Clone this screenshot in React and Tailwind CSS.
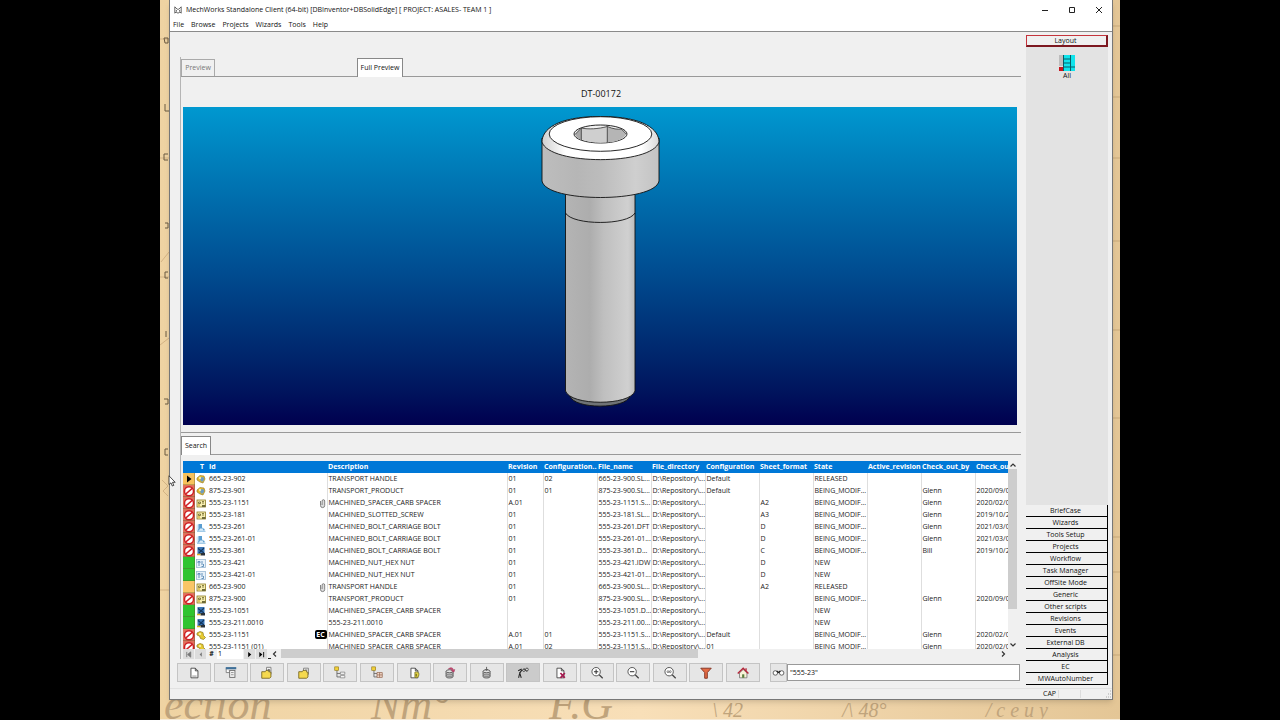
import React from "react";

const MENUS = ["File", "Browse", "Projects", "Wizards", "Tools", "Help"];

const SECTIONS = [
  "BriefCase", "Wizards", "Tools Setup", "Projects", "Workflow", "Task Manager", "OffSite Mode", "Generic",
  "Other scripts", "Revisions", "Events", "External DB", "Analysis", "EC", "MWAutoNumber",
];

const HEADERS = [
  "Revision", "Configuration...", "File_name", "File_directory", "Configuration", "Sheet_format", "State",
  "Active_revision", "Check_out_by", "Check_out_date",
];

const DIR = "D:\\Repository\\...";
const MOD = "BEING_MODIF...";
const SPACER = "MACHINED_SPACER_CARB SPACER";
const BOLT = "MACHINED_BOLT_CARRIAGE BOLT";
const NUT = "MACHINED_NUT_HEX NUT";

// status, type, id, badge, description, then one value for each of HEADERS
const ROWS = [
  ["current", "assembly", "665-23-902", "", "TRANSPORT HANDLE", "01", "02", "665-23-900.SL...", DIR, "Default", "", "RELEASED", "", "", ""],
  ["blocked", "assembly", "875-23-901", "", "TRANSPORT_PRODUCT", "01", "01", "875-23-900.SL...", DIR, "Default", "", MOD, "", "Glenn", "2020/09/03"],
  ["blocked", "drawing", "555-23-1151", "clip", SPACER, "A.01", "", "555-23-1151.S...", DIR, "", "A2", MOD, "", "Glenn", "2020/02/05"],
  ["blocked", "drawing", "555-23-181", "", "MACHINED_SLOTTED_SCREW", "01", "", "555-23-181.SL...", DIR, "", "A3", MOD, "", "Glenn", "2019/10/22"],
  ["blocked", "draft", "555-23-261", "", BOLT, "01", "", "555-23-261.DFT", DIR, "", "D", MOD, "", "Glenn", "2021/03/02"],
  ["blocked", "draft", "555-23-261-01", "", BOLT, "01", "", "555-23-261-01...", DIR, "", "D", MOD, "", "Glenn", "2021/03/02"],
  ["blocked", "dwg", "555-23-361", "", BOLT, "01", "", "555-23-361.D...", DIR, "", "C", MOD, "", "Bill", "2019/10/22"],
  ["new", "sheet", "555-23-421", "", NUT, "01", "", "555-23-421.IDW", DIR, "", "D", "NEW", "", "", ""],
  ["new", "sheet", "555-23-421-01", "", NUT, "01", "", "555-23-421-01...", DIR, "", "D", "NEW", "", "", ""],
  ["released", "drawing", "665-23-900", "clip", "TRANSPORT HANDLE", "01", "", "665-23-900.SL...", DIR, "", "A2", "RELEASED", "", "", ""],
  ["blocked", "drawing", "875-23-900", "", "TRANSPORT_PRODUCT", "01", "", "875-23-900.SL...", DIR, "", "", MOD, "", "Glenn", "2020/09/03"],
  ["new", "dwg", "555-23-1051", "", SPACER, "", "", "555-23-1051.D...", DIR, "", "", "NEW", "", "", ""],
  ["new", "dwg", "555-23-211.0010", "", "555-23-211.0010", "", "", "555-23-211.00...", DIR, "", "", "NEW", "", "", ""],
  ["blocked", "part", "555-23-1151", "ec", SPACER, "A.01", "01", "555-23-1151.S...", DIR, "Default", "", MOD, "", "Glenn", "2020/02/05"],
  ["blocked", "part", "555-23-1151 (01)", "", SPACER, "A.01", "02", "555-23-1151.S...", DIR, "01", "", MOD, "", "Glenn", "2020/02/05"],
];

const STATUS_BG = {
  current: "bg-[#f7c25c]",
  blocked: "bg-[#e0705c]",
  new: "bg-[#2fc42f]",
  released: "bg-[#f9c566]",
};

function StatusIcon({ kind }) {
  return (
    <svg viewBox="0 0 12 12" className="block size-3" aria-hidden="true">
      {kind === "current" && <path d="M4 2.500v7L8.500 6z" fill="#000" />}
      {kind === "blocked" && (
        <>
          <circle cx="6" cy="6.200" r="4.500" fill="#fff" stroke="#cf1f25" strokeWidth="1.500" />
          <path d="M2.800 9 9.200 3.400" stroke="#cf1f25" strokeWidth="1.500" />
        </>
      )}
      <path d="M0 11.500h12M11.500 0v12" stroke="#5a5a2c" strokeOpacity=".35" />
    </svg>
  );
}

function TypeIcon({ kind }) {
  return (
    <svg viewBox="0 0 12 12" className="block size-3" aria-hidden="true">
      {kind === "assembly" && (
        <>
          <path d="M2 5 5 2.500l4 .5 1 3-2 4-3-1-3-2z" fill="#e3b92d" stroke="#93751b" strokeWidth=".6" />
          <path d="M6 4l3 .5V7l-2 2-2-2z" fill="#6d9cc0" />
          <circle cx="5" cy="5" r="1.200" fill="#f8ec9c" />
        </>
      )}
      {kind === "part" && (
        <>
          <path d="M2 4 5 2.500l3 1 .5 3 2 2-2 2-3-1-1-2.500L2 6z" fill="#e6ca32" stroke="#8c7a1c" strokeWidth=".7" />
          <circle cx="5" cy="5" r="1.100" fill="#fbf6b8" />
        </>
      )}
      {kind === "drawing" && (
        <>
          <rect x="2" y="3" width="8.500" height="7" fill="#f7eeb0" stroke="#8d7c22" strokeWidth=".8" />
          <path d="M3.500 5h2v1.500h-2zM7 4.500h2M7 6h2" fill="none" stroke="#6b6326" strokeWidth=".8" />
          <path d="M7 8h3.500v2H7z" fill="#6e6a38" />
          <path d="M3 8h2" stroke="#c69e12" />
        </>
      )}
      {kind === "draft" && (
        <>
          <path d="M1.500 3.500h3l5 4.500v2h-8z" fill="#d6eaf8" />
          <path d="M3.500 8V3h3.500v4l2.500 1v1.500h-1L7.500 7.500H5L4 9.500H2.500z" fill="#5a9dd0" />
          <path d="M2 10.300h8.500" stroke="#8dbfe2" />
        </>
      )}
      {kind === "dwg" && (
        <>
          <rect x="2.500" y="2" width="7" height="7" fill="#3d78b8" />
          <path d="M3 3.500 9 8M9 3 4 8" stroke="#12365f" strokeWidth="1.100" />
          <path d="M5.500 8h4.500v2.500H5.500z" fill="#2b3138" />
          <path d="M2 9.500h3.500" stroke="#dbb327" strokeWidth="1.500" />
        </>
      )}
      {kind === "sheet" && (
        <>
          <rect x="1.500" y="2.500" width="9" height="8" fill="#e7f1f9" stroke="#9bb9d3" strokeWidth=".8" />
          <path d="M3 4.500h2v1.500H3zM3 8h2M7 4v4M8.500 7v2.500H6.500" fill="none" stroke="#5688b4" strokeWidth=".9" />
        </>
      )}
    </svg>
  );
}

function Badge({ kind }) {
  if (kind === "clip") {
    return (
      <svg viewBox="0 0 8 12" className="h-3 w-2 shrink-0" aria-label="Attachment">
        <path d="M1.500 4v4.500a2 2 0 0 0 4.200 0V4a1.300 1.300 0 0 0-2.600 0v4" fill="#ddd" stroke="#777" strokeWidth=".9" />
      </svg>
    );
  }
  return (
    <span className="mt-px flex h-[9px] w-3 shrink-0 items-center justify-center rounded-xs bg-black font-bold text-white">EC</span>
  );
}

const PAGE = <path d="M4.500 2.500h5l3 3v8h-8z M9.500 2.500v3h3" fill="#fff" stroke="#444" />;
const FOLDER = <path d="M2 6.500h4l1-1.500h4v2h1.500v5.500L11 14H2z" fill="#f5d94e" stroke="#6d5a12" strokeWidth=".9" />;
const LENS = (
  <>
    <circle cx="7" cy="6.500" r="4.800" fill="#fff" stroke="#444" />
    <path d="m10.500 10 4 4" stroke="#444" strokeWidth="1.500" />
  </>
);
const DRUM = (
  <>
    <path d="M3.500 6v6c0 2.300 8 2.300 8 0V6" fill="#bbb" stroke="#555" />
    <ellipse cx="7.500" cy="6" rx="4" ry="1.700" fill="#e4e4e4" stroke="#555" />
    <path d="M3.500 8.500c0 2 8 2 8 0M3.500 10.500c0 2 8 2 8 0" fill="none" stroke="#666" strokeWidth=".7" />
  </>
);
const TREE = (
  <>
    <path d="M4.500 5v7.500H8M4.500 8.500H8" fill="none" stroke="#666" />
    <rect x="2" y="1" width="4.500" height="4" fill="#f2d038" stroke="#8a7419" strokeWidth=".7" />
  </>
);

const TOOLS = [
  ["New document", <>{PAGE}<path d="M6 11.500h5" stroke="#888" /></>],
  ["Card view", <>
    <path d="M2.500 3v4.500h4" fill="#fff" stroke="#777" />
    <path d="M2 2.500h12" stroke="#3e6f98" strokeWidth="2.500" />
    <rect x="6.500" y="5" width="6" height="8" fill="#f4f4f4" stroke="#666" />
    <path d="M8 7.500h3M8 10h3" stroke="#888" />
  </>],
  ["Check in", <><path d="M7.500 1.500h5v8h-5z" fill="#fff" stroke="#777" />{FOLDER}<path d="M10 7V3.500M8.500 5 10 3.300 11.500 5" fill="none" stroke="#555" strokeWidth=".8" /></>],
  ["Check out", <><path d="M7.500 2.500h5.500v7H7.500z" fill="#fff" stroke="#777" />{FOLDER}<path d="M9 4.500h3" stroke="#777" /></>],
  ["Collapse tree", <>{TREE}<path d="M8.500 7h5v2.500h-5zM8.500 11h5v2.500h-5z" fill="#fff" stroke="#777" strokeWidth=".8" /></>],
  ["Expand tree", <>{TREE}<path d="M8 7.500h6V13H8z" fill="#f7dfd0" stroke="#8e5d45" strokeWidth=".8" /><path d="M11 7.500V13M8 10.200h6" stroke="#8e5d45" strokeWidth=".8" /></>],
  ["Document properties", <>{PAGE}<path d="M9 7c4-1 5 1 4.500 3.500S11 14 9 13z" fill="#e2d244" stroke="#6f6a1d" strokeWidth=".8" /><path d="M10.500 9v3" stroke="#494613" /></>],
  ["Restore from vault", <>{DRUM}<path d="M6 3.500c3-2.500 5-2 6 1l1.500-.5-1 3-3-1.500 1.200-.6c-1-1.500-2.500-1.500-4.700-1.400z" fill="#cf4b76" stroke="#8f2a4c" strokeWidth=".5" /></>],
  ["Vault", <>{DRUM}<path d="M7.500 1v4M6 3.500 7.500 5 9 3.500" fill="none" stroke="#555" /></>],
  ["Track", <>
    <path d="M3 13.500C4 9 4 6 7.500 4.500M4 7l2 6.500M2.500 5.500l4-2" fill="none" stroke="#222" strokeWidth="1.200" />
    <path d="M8 4.500h4.500M9 2.500l3.500 4" stroke="#333" />
    <circle cx="9" cy="5" r="1.300" fill="#eee" stroke="#222" strokeWidth=".8" />
    <circle cx="12.500" cy="4" r="1.600" fill="#ddd" stroke="#222" strokeWidth=".8" />
  </>],
  ["Remove document", <>{PAGE}<path d="m8.500 8 5 5.500M13.500 8l-5 5.500" stroke="#a51c50" strokeWidth="2" /></>],
  ["Zoom in", <>{LENS}<path d="M4.500 6.500h5M7 4v5" stroke="#333" strokeWidth="1.200" /></>],
  ["Zoom out", <>{LENS}<path d="M4.500 6.500h5" stroke="#333" strokeWidth="1.200" /></>],
  ["Zoom all", <>{LENS}<circle cx="5.700" cy="6.500" r="1.100" fill="none" stroke="#555" strokeWidth=".8" /><circle cx="8.300" cy="6.500" r="1.100" fill="none" stroke="#555" strokeWidth=".8" /></>],
  ["Filter", <path d="M2 2.500h12L9.500 7.500V14h-3V7.500z" fill="#e36a43" stroke="#7d2b1b" />],
  ["Home", <>
    <path d="M4 8v5.500h8.500V8L8.200 4z" fill="#f8f2d9" stroke="#666" strokeWidth=".8" />
    <path d="M2 8.500 8.200 2.500l6 6" fill="none" stroke="#b3273a" strokeWidth="1.700" />
    <path d="M7 9.500h2.500v4H7z" fill="#5b7f3d" />
    <path d="M11.500 2.500v3" stroke="#b3273a" strokeWidth="1.500" />
  </>],
];

function Bolt() {
  return (
    <svg viewBox="540 107 120 318" className="h-full" role="img" aria-label="Socket head bolt">
      <defs>
        <linearGradient id="head" x1="0" x2="1">
          <stop offset="0" stopColor="#bdbdbd" />
          <stop offset=".3" stopColor="#b6b6b6" />
          <stop offset=".5" stopColor="#bcbcbc" />
          <stop offset=".8" stopColor="#cfcfcf" />
          <stop offset="1" stopColor="#c3c3c3" />
        </linearGradient>
        <linearGradient id="shank" x1="0" x2="1">
          <stop offset="0" stopColor="#b4b4b4" />
          <stop offset=".35" stopColor="#adadad" />
          <stop offset=".55" stopColor="#bfbfbf" />
          <stop offset=".9" stopColor="#d0d0d0" />
          <stop offset="1" stopColor="#bcbcbc" />
        </linearGradient>
        <linearGradient id="rim" x1="0" x2="1">
          <stop offset="0" stopColor="#d0d0d0" />
          <stop offset=".2" stopColor="#fff" />
          <stop offset=".85" stopColor="#fff" />
          <stop offset="1" stopColor="#d8d8d8" />
        </linearGradient>
      </defs>
      <g stroke="#111" strokeWidth=".9">
        <path d="M570 396c4 13.500 56 13.500 60 0z" fill="#6f7376" />
        <path d="M565.500 190v201c5 15 64.500 15 69.500 0V190z" fill="url(#shank)" />
        <path d="M565.500 213c7 12.600 62.500 12.600 69.500 0" fill="none" />
        <path d="M542 138v43c4 22 113 22 117 0v-43z" fill="url(#head)" />
        <path d="M542 142c0-12 14-25.500 58.500-25.500S659 130 659 142c-7 23.500-110 23.500-117 0z" fill="url(#rim)" />
        <ellipse cx="600.500" cy="134" rx="51.300" ry="17.300" fill="#fff" />
        <ellipse cx="600.500" cy="134" rx="26.500" ry="9" fill="#f2f2f2" />
      </g>
      <path d="m575 134.500 6.300-6.500c7 1.500 17 1 26-1.500 6 2.500 10 3 14 2.500l5 5c-3 5.500-12 8.700-26 8.700-11 0-21-2.500-25.300-8.200z" fill="#cfcfcf" />
      <path d="M607.300 126.500c6 2.500 10 3 14 2.500l5 5c-3 5-9 7.500-19 8.500z" fill="#b5b5b5" />
      <path d="m575 134.500 6.300-6.500v12.300c-3-1.500-5-3.300-6.300-5.800z" fill="#a8a8a8" />
      <path d="M581.300 128v12.300m26-13.800v16M575 134.500l6.300-6.500c7 1.500 17 1 26-1.500 6 2.500 10 3 14 2.500l5 5" fill="none" stroke="#333" strokeWidth=".8" />
    </svg>
  );
}

const NAV = "flex w-[11px] shrink-0 items-center justify-center bg-[#dcdcdc]";
const CELL = "overflow-hidden border-l border-[#dedede] pl-px align-top whitespace-nowrap";

function Grid() {
  return (
    <div className="h-47 overflow-hidden bg-white">
      <table className="w-[846px] table-fixed border-collapse text-[#222]">
        <colgroup>
          <col className="w-3" />
          <col className="w-[13px]" />
          <col className="w-[119px]" />
          <col className="w-[180px]" />
          <col className="w-9" />
          {HEADERS.slice(1).map((h) => <col key={h} className="w-[54px]" />)}
        </colgroup>
        <thead>
          <tr className="h-3 bg-[#0078d7] text-left leading-3 text-white">
            <th className="p-0" aria-label="Status" />
            <th className="p-0 pr-1 text-right font-bold">T</th>
            <th className="p-0 pl-px font-bold">Id</th>
            {["Description", ...HEADERS].map((h) => (
              <th key={h} className="overflow-hidden p-0 pl-px font-bold whitespace-nowrap">{h}</th>
            ))}
          </tr>
        </thead>
        <tbody>
          {ROWS.map(([status, type, id, badge, ...rest], i) => (
            <tr key={i} className="h-3 leading-[11px]">
              <td className={`p-0 align-top ${STATUS_BG[status]}`}><StatusIcon kind={status} /></td>
              <td className="p-0 align-top"><TypeIcon kind={type} /></td>
              <td className="p-0 align-top">
                <div className="flex h-3 justify-between pl-px whitespace-nowrap">
                  <span>{id}</span>
                  {badge && <Badge kind={badge} />}
                </div>
              </td>
              {rest.map((v, j) => <td key={j} className={CELL}>{v}</td>)}
            </tr>
          ))}
        </tbody>
      </table>
    </div>
  );
}

function Chevron({ d }) {
  return (
    <svg viewBox="0 0 8 8" className="size-2 shrink-0" aria-hidden="true">
      <path d={d} fill="none" stroke="#333" strokeWidth="1.200" />
    </svg>
  );
}

function Desktop() {
  return (
    <div className="absolute inset-0 overflow-hidden bg-linear-to-r from-[#efd3a2] via-[#f8dfb8] to-[#e4c696]" aria-hidden="true">
      <svg className="absolute top-0 left-0 h-full w-[9px]" viewBox="0 0 9 720" preserveAspectRatio="none">
        <path d="M0 39h9M0 158h9M0 277h9M0 590h9M1 262l8-10M0 345l9-7M2 480l6 6-5 5 5 5" fill="none" stroke="#d3b384" />
        <path d="M4 38h4v5H5zM5 104v7h4M8 154H4v6h4M5 223h3v5H5M8 272H5v6h3M6 331v6M4 399h4v5H5M8 449H5v6h3" fill="none" stroke="#6b5a42" />
      </svg>
      <svg className="absolute top-0 right-0 h-full w-[7px]" viewBox="0 0 7 720" preserveAspectRatio="none">
        <path d="M0 26h7M0 97h7M0 158h7M0 241h7M0 330h7M0 418h7M0 537h7M0 572h7M0 655h7" fill="none" stroke="#c8a97a" />
      </svg>
      <div className="absolute inset-x-0 bottom-0 flex items-end justify-between pr-18 pl-1 font-['Liberation_Serif',serif] text-[44px] leading-[30px] text-[#c0a47c] italic">
        <span>ection</span><span>Nm°</span><span>F.G</span>
        <span className="text-xl leading-5">\ 42</span><span className="text-xl leading-5">/\ 48°</span><span className="text-xl leading-5">/ c e u y</span>
      </div>
      <div className="absolute inset-x-0 bottom-0 h-px bg-[#f6ead6]" />
    </div>
  );
}

export default function App() {
  return (
    <div className="flex h-screen justify-center bg-black font-['Open_Sans','Noto_Sans',sans-serif] text-[7px] leading-3 text-[#111]">
      <div className="relative flex w-3/4 pr-[7px] pb-5 pl-[9px]">
        <Desktop />
        <main className="relative flex min-w-0 flex-1 flex-col border border-t-0 border-[#777] bg-[#f0f0f0] shadow-md">
          <header className="border-b border-[#8a8a8a] bg-white">
            <div className="flex h-[18px] items-center pt-px pl-1">
              <svg viewBox="0 0 10 10" className="mr-1 size-2" aria-hidden="true">
                <path d="M1 9V1l3 3h2l3-3v8L7.500 7.500 5 9 2.500 7.500zM3 5v2M7 5v2" fill="none" stroke="#444" />
              </svg>
              <h1 className="flex-1">MechWorks Standalone Client (64-bit) [DBInventor+DBSolidEdge] [ PROJECT: ASALES- TEAM 1 ]</h1>
              <div className="flex gap-[15px] pr-[7px]">
                {[["Minimize", "M3 6.500h6"], ["Maximize", "M3.500 3.500h5v5h-5z"], ["Close", "m3 3 6 6m0-6-6 6"]].map(([name, d]) => (
                  <button key={name} aria-label={name} className="size-3">
                    <svg viewBox="0 0 12 12" className="size-3"><path d={d} fill="none" stroke="#222" /></svg>
                  </button>
                ))}
              </div>
            </div>
            <nav className="flex h-[13px] items-center gap-[7px] pl-[3px]">
              {MENUS.map((m) => <button key={m}>{m}</button>)}
            </nav>
          </header>

          <div className="flex min-h-0 flex-1 gap-[5px] pr-1 pl-[7px]">
            <div className="flex min-w-0 flex-1 flex-col">
              <div className="mt-[25px] ml-[3px] flex min-h-0 flex-1 flex-col border-l border-[#b5b5b5]">
                <div className="flex h-5 items-end gap-[142px] border-b border-[#999]">
                  <button className="h-[17px] w-[34px] border border-b-0 border-[#aaa] text-[#777]">Preview</button>
                  <button className="-mb-px h-[19px] w-[46px] border border-b-0 border-[#888] bg-white">Full Preview</button>
                </div>
                <h2 className="flex h-[30px] items-center justify-center pt-1 text-[9px]">DT-00172</h2>
                <div className="mr-1 ml-0.5 flex min-h-0 flex-1 justify-center bg-linear-to-b from-[#0098d0] via-[#004f93] to-[#00004f]">
                  <Bolt />
                </div>
                <div className="mt-[7px] flex h-[23px] items-end border-y border-[#999]">
                  <button className="-mb-px h-[19px] w-[30px] border border-b-0 border-[#888] bg-white">Search</button>
                </div>
                <div className="mt-[6px] mr-1 ml-0.5 flex">
                  <div className="min-w-0 flex-1"><Grid /></div>
                  <div className="flex w-[9px] shrink-0 flex-col items-center justify-between bg-[#f0f0f0]">
                    <Chevron d="M1.500 5.500 4 3l2.500 2.500" />
                    <div className="mb-auto h-35 w-full bg-[#cdcdcd]" />
                    <Chevron d="M1.500 2.500 4 5l2.500-2.500" />
                  </div>
                </div>
                <div className="mr-3 ml-0.5 flex h-[10px] items-stretch gap-px">
                  <button className={NAV} aria-label="First"><svg viewBox="0 0 8 8" className="size-[7px]"><path d="M2 1v6M6.500 1 3 4l3.500 3z" fill="#777" stroke="#777" /></svg></button>
                  <button className={NAV} aria-label="Previous"><svg viewBox="0 0 8 8" className="size-[7px]"><path d="M5.500 1.500 3 4l2.500 2.500z" fill="#777" /></svg></button>
                  <span className="w-[9px] text-center leading-[10px] font-bold">#</span>
                  <input aria-label="Record number" defaultValue="1" className="w-[26px] bg-white pl-px leading-[10px] text-black" />
                  <button className={NAV} aria-label="Next"><svg viewBox="0 0 8 8" className="size-[7px]"><path d="M2.500 1v6L6 4z" fill="#000" /></svg></button>
                  <button className={NAV} aria-label="Last"><svg viewBox="0 0 8 8" className="size-[7px]"><path d="M1.500 1v6L5 4zM6 1h1v6H6z" fill="#000" /></svg></button>
                  <span className="w-[3px] border-b border-[#222]" />
                  <span className="flex items-center"><Chevron d="M4 1.500 1.500 4 4 6.500" /></span>
                  <div className="flex-1"><div className="h-[9px] w-[58%] bg-[#cdcdcd]" /></div>
                  <span className="flex items-center"><Chevron d="M1 1.500 3.500 4 1 6.500" /></span>
                </div>
              </div>
              <div className="mt-1 mb-[6px] flex h-[19px] items-stretch gap-[10px]">
                <div className="flex w-[583px] shrink-0 justify-between">
                  {TOOLS.map(([name, icon]) => (
                    <button
                      key={name}
                      aria-label={name}
                      className={`flex w-[34px] items-center justify-center border border-[#c4c4c4] ${name === "Track" ? "bg-[#cbcbcb]" : "bg-[#e6e6e6]"}`}
                    >
                      <svg viewBox="0 0 16 16" className="size-[14px]">{icon}</svg>
                    </button>
                  ))}
                </div>
                <div className="flex min-w-0 flex-1">
                  <button aria-label="Search" className="flex w-[17px] shrink-0 items-center justify-center border border-[#c4c4c4] bg-[#e6e6e6]">
                    <svg viewBox="0 0 14 10" className="h-[9px] w-[13px]">
                      <circle cx="3.500" cy="5.500" r="2.500" fill="#fff" stroke="#555" />
                      <circle cx="10.500" cy="5.500" r="2.500" fill="#fff" stroke="#555" />
                      <path d="M5 3.500 7 5l2-1.500" fill="none" stroke="#222" strokeWidth="1.500" />
                    </svg>
                  </button>
                  <input aria-label="Search text" defaultValue={'"555-23"'} className="my-px mr-px min-w-0 flex-1 border border-[#999] bg-white pl-0.5" />
                </div>
              </div>
            </div>

            <aside className="mt-[3px] mb-[3px] flex w-[82px] shrink-0 flex-col bg-[#e3e3e3]">
              <button className="h-3 border border-r-2 border-b-2 border-[#c5343c] border-r-[#7d1820] border-b-[#7d1820] bg-[#f0f0f0] pr-0.5 leading-[10px]">Layout</button>
              <button className="mt-2 mb-auto flex flex-col items-center leading-[9px]">
                <svg viewBox="0 0 16 16" className="size-4" aria-hidden="true">
                  <path d="M0 0h4v11H0z" fill="#bdbdbd" />
                  <path d="M4 0h12v16H4z" fill="#10e4ec" />
                  <path d="M4.500 0v16M11.500 0v16M4 4h8M4 8h8M4 12h12" stroke="#075e68" />
                  <path d="M0 12h4v4H0z" fill="#c8141c" />
                </svg>
                All
              </button>
              {SECTIONS.map((s) => (
                <button key={s} className="h-3 border-r border-b border-black bg-[#f0f0f0] pr-0.5 leading-[11px]">{s}</button>
              ))}
            </aside>
          </div>

          <footer className="flex h-[11px] items-center justify-end border-t border-[#e2e2e2]">
            <span className="w-[15px] whitespace-nowrap">CAP</span>
            <span className="h-2 w-[22px] border-l border-[#dcdcdc]" />
            <span className="h-2 w-5 border-l border-[#dcdcdc]" />
            <svg viewBox="0 0 12 10" className="h-[10px] w-3" aria-hidden="true"><path d="M10 2h1M8 5h1m1 0h1M6 8h1m1 0h1m1 0h1" stroke="#aaa" /></svg>
          </footer>
        </main>
        <svg viewBox="0 0 8 12" className="absolute top-[66%] left-2 h-3 w-2" aria-hidden="true">
          <path d="M1 .8v8.700l2-1.700 1.300 3.200 1.500-.6-1.300-3.100h2.700z" fill="#fff" stroke="#222" strokeWidth=".8" />
        </svg>
      </div>
    </div>
  );
}
